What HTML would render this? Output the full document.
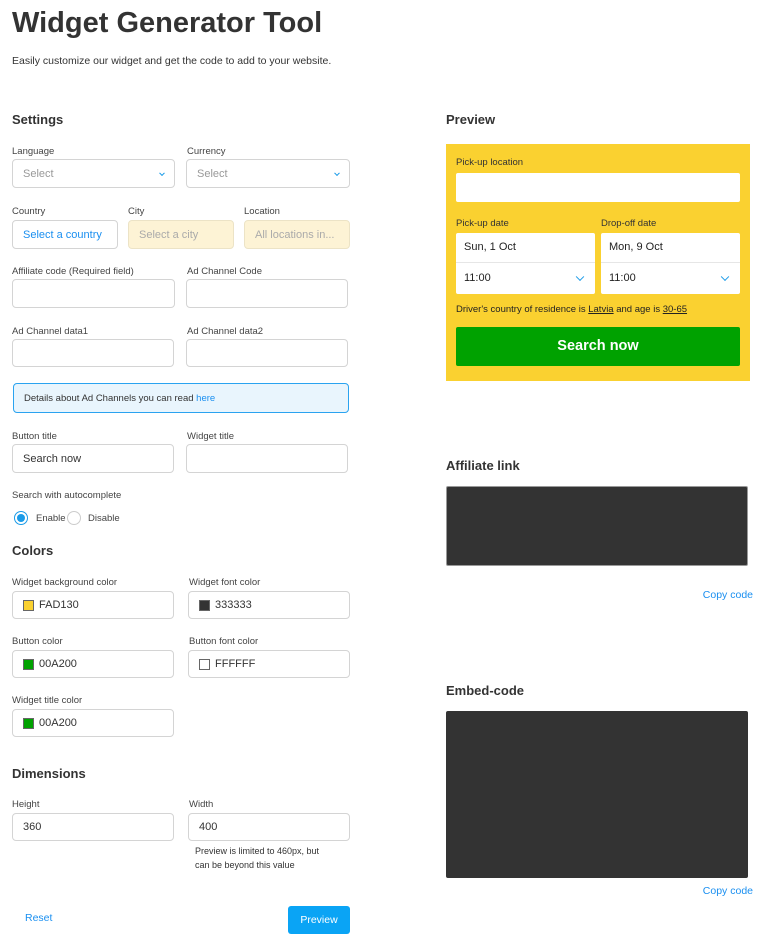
<!DOCTYPE html>
<html><head><meta charset="utf-8"><style>
*{box-sizing:border-box;margin:0;padding:0}
body{width:765px;height:941px;position:relative;background:#fff;font-family:"Liberation Sans",Arial,sans-serif;color:#333;overflow:hidden}
.a{position:absolute;white-space:nowrap}
.h{font-weight:bold;font-size:13px;color:#333}
.l{font-size:9.5px;color:#444}
.b{position:absolute;border:1px solid #d4d4d4;border-radius:4px;background:#fff;font-size:11px;padding-left:10px;display:flex;align-items:center}
.ph{color:#999}
.sw{display:inline-block;width:11px;height:11px;border:1px solid #666;margin-right:5px}
.chev{position:absolute;right:10px;top:50%;width:4px;height:4px;border-right:1px solid #1a9be8;border-bottom:1px solid #1a9be8;transform:translateY(-70%) rotate(45deg)}
.wb{position:absolute;background:#fff;border-radius:2px;font-size:11px;color:#222}
</style></head><body>
<div class="a" style="left:12px;top:7px;font-size:29px;font-weight:bold;color:#333">Widget Generator Tool</div>
<div class="a" style="left:12px;top:55px;font-size:10.5px;color:#333">Easily customize our widget and get the code to add to your website.</div>

<div class="a h" style="left:12px;top:112px">Settings</div>
<div class="a l" style="left:12px;top:146px">Language</div>
<div class="a l" style="left:187px;top:146px">Currency</div>
<div class="b ph" style="left:12px;top:159px;width:163px;height:29px">Select<span class="chev"></span></div>
<div class="b ph" style="left:186px;top:159px;width:164px;height:29px">Select<span class="chev"></span></div>

<div class="a l" style="left:12px;top:206px">Country</div>
<div class="a l" style="left:128px;top:206px">City</div>
<div class="a l" style="left:244px;top:206px">Location</div>
<div class="b" style="left:12px;top:220px;width:106px;height:29px;color:#1a8ff0">Select a country</div>
<div class="b ph" style="left:128px;top:220px;width:106px;height:29px;background:#fdf3d5;border-color:#ece3c6;color:#aaa">Select a city</div>
<div class="b ph" style="left:244px;top:220px;width:106px;height:29px;background:#fdf3d5;border-color:#ece3c6;color:#aaa">All locations in...</div>

<div class="a l" style="left:12px;top:266px">Affiliate code (Required field)</div>
<div class="a l" style="left:187px;top:266px">Ad Channel Code</div>
<div class="b" style="left:12px;top:279px;width:163px;height:29px"></div>
<div class="b" style="left:186px;top:279px;width:162px;height:29px"></div>
<div class="a l" style="left:12px;top:326px">Ad Channel data1</div>
<div class="a l" style="left:187px;top:326px">Ad Channel data2</div>
<div class="b" style="left:12px;top:339px;width:162px;height:28px"></div>
<div class="b" style="left:186px;top:339px;width:162px;height:28px"></div>

<div class="b" style="left:13px;top:383px;width:336px;height:30px;background:#e9f5fd;border-color:#2aa3f0;font-size:9.5px;color:#333">Details about Ad Channels you can read&nbsp;<span style="color:#1a8ff0">here</span></div>

<div class="a l" style="left:12px;top:431px">Button title</div>
<div class="a l" style="left:187px;top:431px">Widget title</div>
<div class="b" style="left:12px;top:444px;width:162px;height:29px">Search now</div>
<div class="b" style="left:186px;top:444px;width:162px;height:29px"></div>

<div class="a l" style="left:12px;top:490px">Search with autocomplete</div>
<div class="a" style="left:14px;top:511px;width:14px;height:14px;border-radius:50%;border:1px solid #1a9be8;background:#fff"><div style="position:absolute;left:2px;top:2px;width:8px;height:8px;border-radius:50%;background:#1a9be8"></div></div>
<div class="a l" style="left:36px;top:513px">Enable</div>
<div class="a" style="left:67px;top:511px;width:14px;height:14px;border-radius:50%;border:1px solid #ccc"></div>
<div class="a l" style="left:88px;top:513px">Disable</div>

<div class="a h" style="left:12px;top:543px">Colors</div>
<div class="a l" style="left:12px;top:577px">Widget background color</div>
<div class="a l" style="left:189px;top:577px">Widget font color</div>
<div class="b" style="left:12px;top:591px;width:162px;height:28px"><span class="sw" style="background:#fad130"></span>FAD130</div>
<div class="b" style="left:188px;top:591px;width:162px;height:28px"><span class="sw" style="background:#333"></span>333333</div>
<div class="a l" style="left:12px;top:636px">Button color</div>
<div class="a l" style="left:189px;top:636px">Button font color</div>
<div class="b" style="left:12px;top:650px;width:162px;height:28px"><span class="sw" style="background:#00a200"></span>00A200</div>
<div class="b" style="left:188px;top:650px;width:162px;height:28px"><span class="sw" style="background:#fff"></span>FFFFFF</div>
<div class="a l" style="left:12px;top:695px">Widget title color</div>
<div class="b" style="left:12px;top:709px;width:162px;height:28px"><span class="sw" style="background:#00a200"></span>00A200</div>

<div class="a h" style="left:12px;top:766px">Dimensions</div>
<div class="a l" style="left:12px;top:799px">Height</div>
<div class="a l" style="left:189px;top:799px">Width</div>
<div class="b" style="left:12px;top:813px;width:162px;height:28px">360</div>
<div class="b" style="left:188px;top:813px;width:162px;height:28px">400</div>
<div class="a" style="left:195px;top:844px;font-size:9px;color:#333;line-height:14px">Preview is limited to 460px, but<br>can be beyond this value</div>

<div class="a" style="left:25px;top:912px;font-size:10.5px;color:#1a8ff0">Reset</div>
<div class="a" style="left:288px;top:906px;width:62px;height:28px;background:#0aa4f5;border-radius:3px;color:#fff;font-size:10.5px;text-align:center;line-height:28px">Preview</div>

<div class="a h" style="left:446px;top:112px">Preview</div>
<div class="a" style="left:446px;top:144px;width:304px;height:237px;background:#fad130"></div>
<div class="a l" style="left:456px;top:157px;color:#333">Pick-up location</div>
<div class="wb" style="left:456px;top:173px;width:284px;height:29px"></div>
<div class="a l" style="left:456px;top:218px;color:#333">Pick-up date</div>
<div class="a l" style="left:601px;top:218px;color:#333">Drop-off date</div>
<div class="wb" style="left:456px;top:233px;width:139px;height:61px"><div style="position:absolute;left:8px;top:8px">Sun, 1 Oct</div><div style="position:absolute;left:0;right:0;top:29px;border-top:1px solid #e6e6e6"></div><div style="position:absolute;left:8px;top:39px">11:00</div><span class="chev" style="top:45px;right:12px;width:6px;height:6px"></span></div>
<div class="wb" style="left:601px;top:233px;width:139px;height:61px"><div style="position:absolute;left:8px;top:8px">Mon, 9 Oct</div><div style="position:absolute;left:0;right:0;top:29px;border-top:1px solid #e6e6e6"></div><div style="position:absolute;left:8px;top:39px">11:00</div><span class="chev" style="top:45px;right:12px;width:6px;height:6px"></span></div>
<div class="a" style="left:456px;top:304px;font-size:9.5px;color:#222">Driver's country of residence is <u>Latvia</u> and age is <u>30-65</u></div>
<div class="a" style="left:456px;top:327px;width:284px;height:39px;background:#00a200;border-radius:2px;color:#fff;font-weight:bold;font-size:14.5px;text-align:center;line-height:39px">Search now</div>

<div class="a h" style="left:446px;top:458px">Affiliate link</div>
<div class="a" style="left:446px;top:486px;width:302px;height:80px;background:#333;border:1px solid #999;border-radius:2px"></div>
<div class="a" style="right:12px;top:589px;font-size:10.5px;color:#1a8ff0">Copy code</div>
<div class="a h" style="left:446px;top:683px">Embed-code</div>
<div class="a" style="left:446px;top:711px;width:302px;height:167px;background:#333;border-radius:2px"></div>
<div class="a" style="right:12px;top:885px;font-size:10.5px;color:#1a8ff0">Copy code</div>
</body></html>
